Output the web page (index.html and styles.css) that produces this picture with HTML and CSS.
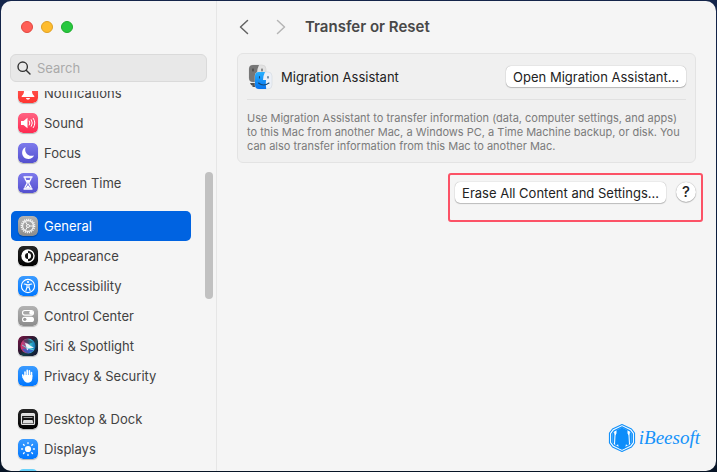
FILE: index.html
```html
<!DOCTYPE html>
<html lang="en">
<head>
<meta charset="utf-8">
<title>Transfer or Reset</title>
<link rel="stylesheet" href="styles.css">
</head>
<body>
<svg class="defs" aria-hidden="true">
  <defs>
    <linearGradient id="blue" x2="0" y2="1"><stop stop-color="#3b9bff"/><stop offset="1" stop-color="#0077ff"/></linearGradient>
    <linearGradient id="red" x2="0" y2="1"><stop stop-color="#ff5f57"/><stop offset="1" stop-color="#ff3430"/></linearGradient>
    <linearGradient id="pink" x2="0" y2="1"><stop stop-color="#ff6482"/><stop offset="1" stop-color="#ff2950"/></linearGradient>
    <linearGradient id="indigo" x2="0" y2="1"><stop stop-color="#7d7aec"/><stop offset="1" stop-color="#5450cf"/></linearGradient>
    <linearGradient id="gray" x2="0" y2="1"><stop stop-color="#b2b2b2"/><stop offset="1" stop-color="#8c8c8c"/></linearGradient>
    <linearGradient id="black" x2="0" y2="1"><stop stop-color="#262626"/><stop offset="1" stop-color="#000"/></linearGradient>
    <linearGradient id="siri" x2="1" y2="1"><stop stop-color="#7c1748"/><stop offset=".45" stop-color="#2c1830"/><stop offset=".6" stop-color="#133f48"/><stop offset="1" stop-color="#150c2c"/></linearGradient>
    <linearGradient id="orb" x2="1" y2="0"><stop stop-color="#e42f68"/><stop offset=".45" stop-color="#785a91"/><stop offset=".65" stop-color="#33c0cf"/><stop offset="1" stop-color="#176bb0"/></linearGradient>
    <linearGradient id="face" x2="0" y2="1"><stop stop-color="#27b0ff"/><stop offset="1" stop-color="#0873ee"/></linearGradient>
  </defs>
</svg>
<div class="window">
  <aside class="sidebar">
    <div class="lights"><i class="close"></i><i class="minimize"></i><i class="expand"></i></div>
    <label class="search">
      <svg width="14" height="14" viewBox="0 0 14 14" fill="none" stroke="#333" stroke-width="1.4" stroke-linecap="round"><circle cx="5.7" cy="5.7" r="4.7"/><path d="M9.2 9.2 13 13"/></svg>
      <input type="text" placeholder="Search" aria-label="Search">
    </label>
    <nav class="scroller">
      <ul>
        <li><a href="#"><svg class="icon" viewBox="0 0 20 20"><rect width="20" height="20" rx="5" fill="url(#red)"/><path fill="#fff" d="M10 3c-3 0-4 2.2-4 4.500 0 3-.7 4-2.300 5.500v1h12.600v-1C14.700 11.500 14 10.500 14 7.500 14 5.200 13 3 10 3zM8 15c.3 2.300 3.700 2.300 4 0z"/></svg>Notifications</a></li>
        <li><a href="#"><svg class="icon" viewBox="0 0 20 20"><rect width="20" height="20" rx="5" fill="url(#pink)"/><path fill="#fff" d="M3 8h2.500L9.500 4.700v10.600L5.500 12H3z"/><path fill="none" stroke="#fff" stroke-linecap="round" d="M11.300 8q1.300 2 0 4M13.300 6.700q2.200 3.300 0 6.600M15.300 5.400q3.200 4.600 0 9.200"/></svg>Sound</a></li>
        <li><a href="#"><svg class="icon" viewBox="0 0 20 20"><rect width="20" height="20" rx="5" fill="url(#indigo)"/><path fill="#fff" d="M7.600 4C2 7 3.300 15.700 10.200 16c2.700.1 4.800-1.300 5.800-3.500C9.800 14.200 5.800 9.200 7.600 4z"/></svg>Focus</a></li>
        <li><a href="#"><svg class="icon" viewBox="0 0 20 20"><rect width="20" height="20" rx="5" fill="url(#indigo)"/><path fill="none" stroke="#fff" stroke-width="1.300" d="M5.500 4h9M5.500 16h9M6.800 4c0 3.500 2.300 4 2.300 6s-2.300 2.500-2.300 6M13.200 4c0 3.500-2.300 4-2.300 6s2.300 2.500 2.300 6"/><path fill="#fff" d="M8 7h4l-1.500 3h-1zM7.300 15.500 10 12l2.700 3.500z"/></svg>Screen Time</a></li>
      </ul>
      <ul>
        <li><a href="#" class="selected" aria-current="page"><svg class="icon" viewBox="0 0 20 20"><rect width="20" height="20" rx="5" fill="url(#gray)"/><g fill="none" stroke="#f6f6f6"><circle cx="10" cy="10" r="6.600" stroke-width="1.500" stroke-dasharray="1.200 .87"/><circle cx="10" cy="10" r="5.400" stroke-width="1.200"/><circle cx="10" cy="10" r="1.500"/><path d="M11.500 10h4M9.200 8.700 7.300 5.400M9.200 11.300l-1.900 3.300"/></g></svg>General</a></li>
        <li><a href="#"><svg class="icon" viewBox="0 0 20 20"><rect width="20" height="20" rx="5" fill="url(#black)"/><circle cx="10" cy="10" r="6" fill="none" stroke="#fff" stroke-width="1.400"/><path fill="#fff" d="M10 4a6 6 0 0 0 0 12v-3a3 3 0 0 1 0-6zM10 7a3 3 0 0 1 0 6z"/></svg>Appearance</a></li>
        <li><a href="#"><svg class="icon" viewBox="0 0 20 20"><rect width="20" height="20" rx="5" fill="url(#blue)"/><circle cx="10" cy="10" r="6.600" fill="none" stroke="#fff" stroke-width="1.100"/><circle cx="10" cy="6" r="1.100" fill="#fff"/><path fill="none" stroke="#fff" stroke-width="1.100" stroke-linecap="round" stroke-linejoin="round" d="m6.300 8 2.700.6v2.700L7.900 14.500M13.700 8l-2.700.6v2.700l1.100 3.200M9 8.700h2v2.500H9z"/></svg>Accessibility</a></li>
        <li><a href="#"><svg class="icon" viewBox="0 0 20 20"><rect width="20" height="20" rx="5" fill="url(#gray)"/><rect x="4.500" y="4.500" width="11" height="4.600" rx="2.300" fill="none" stroke="#fff" stroke-width="1.100"/><circle cx="13.200" cy="6.800" r="2" fill="#fff"/><rect x="4" y="10.700" width="12" height="5.300" rx="2.600" fill="#fff"/><circle cx="6.800" cy="13.300" r="1.600" fill="#999"/></svg>Control Center</a></li>
        <li><a href="#"><svg class="icon" viewBox="0 0 20 20"><rect width="20" height="20" rx="5" fill="url(#siri)"/><circle cx="10" cy="10" r="7.500" fill="url(#orb)"/><path fill="#26323e" opacity=".55" d="M5 5q5-4 10 1l-4 2z"/><path fill="#3957c9" opacity=".8" d="M4 13q6-1 12 1-4 5-9 2z"/><path fill="#fff" d="M7 7q3 .3 5 2.400l4 2.300-5 .8-2 2-.7-3.500z" opacity=".9"/><path d="M4 9q5 4 12 5" fill="none" stroke="#6de6ec" stroke-width=".8"/></svg>Siri &amp; Spotlight</a></li>
        <li><a href="#"><svg class="icon" viewBox="0 0 20 20"><rect width="20" height="20" rx="5" fill="url(#blue)"/><path fill="none" stroke="#fff" stroke-width="1.600" stroke-linecap="round" d="M7 11V6M9.200 10V4.400M11.400 10V4.700M13.500 11V6.500M5.300 11.500 4.700 9"/><path fill="#fff" d="M6.200 9h8.100v3.300c0 2.800-1.500 4.400-4.200 4.400-2.500 0-4.500-1.600-5.600-5.200z"/></svg>Privacy &amp; Security</a></li>
      </ul>
      <ul>
        <li><a href="#"><svg class="icon" viewBox="0 0 20 20"><rect width="20" height="20" rx="5" fill="url(#black)"/><rect x="3.500" y="4.500" width="13" height="11" rx="1" fill="none" stroke="#e6e6e6" stroke-width="1.200"/><path fill="#ddd" d="M4 5h12v2H4zM5.500 11h9l1 3.500h-11z"/><path d="M5.500 8.500h9" stroke="#999"/></svg>Desktop &amp; Dock</a></li>
        <li><a href="#"><svg class="icon" viewBox="0 0 20 20"><rect width="20" height="20" rx="5" fill="url(#blue)"/><circle cx="10" cy="10" r="3.100" fill="#fff"/><path stroke="#fff" stroke-width="1.300" stroke-linecap="round" d="M10 3.600v1M10 15.400v1M3.600 10h1M15.400 10h1M5.500 5.500l.7.7M13.800 13.800l.7.7M14.500 5.500l-.7.7M6.200 13.800l-.7.7"/></svg>Displays</a></li>
        <li><a href="#" aria-label="Wallpaper"><svg class="icon" viewBox="0 0 20 20"><rect width="20" height="20" rx="5" fill="#67d1fa"/></svg></a></li>
      </ul>
    </nav>
    <div class="thumb"></div>
  </aside>
  <main>
    <header>
      <button class="arrow" aria-label="Back"><svg width="10" height="16" viewBox="0 0 10 16"><path d="M8.500 1.500 1.500 8l7 6.500"/></svg></button>
      <button class="arrow forward" aria-label="Forward"><svg width="10" height="16" viewBox="0 0 10 16"><path d="m1.500 1.500 7 6.500-7 6.500"/></svg></button>
      <h1>Transfer or Reset</h1>
    </header>
    <section class="card">
      <div class="card-head">
        <svg width="26" height="26" viewBox="0 0 26 26" aria-hidden="true">
          <rect x="2" y="1" width="17" height="17" rx="4" fill="#e2e2e2" stroke="#ccc" stroke-width=".5"/>
          <path fill="#777" d="M6 1h6q-2 4-2 8v9H6q-4 0-4-4V5q0-4 4-4z"/>
          <path stroke="#333" stroke-linecap="round" d="M6 5v2M15 5v2"/>
          <path fill="#555" d="M3 19h5v4H5l1-1q-2 0-3-3z"/>
          <rect x="8" y="8" width="17" height="17" rx="4" fill="#ecf0f7" stroke="#cfd4db" stroke-width=".5"/>
          <path fill="url(#face)" d="M12 8h6q-2 4-2 8h3q-.5 4 .2 9H12q-4 0-4-4v-9q0-4 4-4z"/>
          <path fill="none" stroke="#17466f" stroke-width="1.100" stroke-linecap="round" d="M12.500 12.500v1.500M21 12.500v1.500M11.500 19q5 4 10.500 0"/>
        </svg>
        <h2>Migration Assistant</h2>
        <button class="push">Open Migration Assistant…</button>
      </div>
      <p>Use Migration Assistant to transfer information (data, computer settings, and apps) to this Mac from another Mac, a Windows PC, a Time Machine backup, or disk. You can also transfer information from this Mac to another Mac.</p>
    </section>
    <div class="highlight">
      <button class="push">Erase All Content and Settings…</button>
      <button class="help" aria-label="Help">?</button>
    </div>
    <footer>
      <svg width="28" height="30" viewBox="0 0 28 30" aria-hidden="true">
        <path fill="#fff" stroke="#1492fa" stroke-width="1.200" stroke-linejoin="round" d="m14 1.500 9.500 4.500 3 4v10l-3 4L14 28.500 4.500 24l-3-4V10l3-4z"/>
        <path fill="#fff" stroke="#1492fa" stroke-width="1.300" stroke-linejoin="round" d="m14 3.800 8 4 2.300 3v8.400l-2.300 3-8 4-8-4-2.300-3v-8.400L6 7.800z"/>
        <path fill="#0d8dfa" d="M8.500 7.300 14 4.500l5.500 2.800v3l1 2.200.5 9-2 1-1-1.500-.8 4L14 26l-3.200-1-.8-4L9 22.500l-2-1 .5-9 1-2.200z"/>
        <path fill="#1492fa" d="m4.300 11 1.700-2 .5 3-.5 9-1.700-2zM23.700 11 22 9l-.5 3 .5 9 1.700-2z"/>
      </svg>
      <span>iBeesoft</span>
    </footer>
  </main>
</div>
</body>
</html>
```
FILE: styles.css
```css
* { box-sizing: border-box; }
body {
  margin: 0;
  padding: 1px;
  height: 100vh;
  background: linear-gradient(#14254a, #0a1c3c 60%, #071426);
  font: 13px/16px Inter, "Liberation Sans", sans-serif;
  color: #424242;
}
button, input { font: inherit; color: inherit; }
.defs { position: absolute; width: 0; height: 0; }
.window {
  display: flex;
  height: 100%;
  overflow: hidden;
  border-radius: 10px;
  background: #f5f5f5;
}
.sidebar {
  position: relative;
  flex: 0 0 216px;
  min-width: 0;
  display: flex;
  flex-direction: column;
  border-right: 1px solid #e6e6e6;
}
.lights { display: flex; gap: 8px; padding: 20px 20px 0; }
.lights i { width: 12px; height: 12px; border-radius: 50%; border: 1px solid; }
.lights .close { background: #ff5f57; border-color: #e2463f; }
.lights .minimize { background: #febc2e; border-color: #dfa023; }
.lights .expand { background: #28c840; border-color: #1dac2c; }
.search {
  display: flex;
  align-items: center;
  gap: 6px;
  height: 28px;
  margin: 21px 9px 9px;
  padding: 0 6px;
  border: 1px solid #dadada;
  border-radius: 6px;
  background: #e8e8e8;
}
.search input { flex: 1; width: 0; min-width: 0; border: 0; padding: 0; background: none; outline: 0; }
.search input::placeholder { color: #aaa; opacity: 1; }
.scroller { flex: 1; min-height: 0; overflow: hidden; }
.scroller ul { list-style: none; margin: 0 0 13px; padding: 0 25px 0 10px; }
.scroller ul:first-child { margin-top: -13px; }
.scroller a {
  display: flex;
  align-items: center;
  gap: 6px;
  height: 30px;
  padding: 0 7px;
  border-radius: 5px;
  color: inherit;
  text-decoration: none;
}
.scroller .selected { background: #0063e1; color: #fff; }
.icon { width: 20px; height: 20px; flex: none; border-radius: 5px; box-shadow: 0 1px 1px #0004; }
.thumb { position: absolute; top: 171px; right: 3px; width: 8px; height: 127px; border-radius: 4px; background: #c1c1c1; }
main { flex: 1; min-width: 0; display: flex; flex-direction: column; }
header { display: flex; align-items: center; height: 52px; padding-left: 22px; }
.arrow { display: flex; border: 0; padding: 0; margin-right: 27px; background: none; }
.arrow.forward { margin-right: 19px; }
.arrow path { fill: none; stroke: #636363; stroke-width: 1.5; stroke-linecap: round; stroke-linejoin: round; }
.arrow.forward path { stroke: #b5b5b5; }
h1 { margin: 0; font-size: 15px; line-height: 20px; font-weight: 600; color: #484848; }
.card {
  margin: 0 20px;
  padding: 0 9px;
  border: 1px solid #e3e3e3;
  border-radius: 6px;
  background: #f0f0f0;
}
.card-head { display: flex; align-items: center; height: 46px; border-bottom: 1px solid #e1e1e1; }
h2 { flex: 1; margin: 0 0 0 8px; font-size: 13px; font-weight: 400; color: #222; }
.card p { margin: 11px 0 9px; font-size: 11px; line-height: 14px; color: #7b7b7b; }
.push, .help {
  border: 0;
  background: #fff;
  color: #222;
  box-shadow: 0 0 1px #0006, 0 1px 1px #0003;
}
.push { height: 21px; padding: 0 7px; border-radius: 5px; line-height: 20px; white-space: nowrap; }
.help { width: 20px; height: 20px; padding: 0; border-radius: 50%; font-size: 15px; font-weight: 500; line-height: 20px; }
.highlight {
  align-self: flex-end;
  display: flex;
  align-items: flex-start;
  gap: 10px;
  height: 49px;
  margin: 10px 13px 0 0;
  padding: 7px 5px 0;
  border: 2px solid #fc5266;
  border-radius: 3px;
}
footer { display: flex; align-items: center; justify-content: flex-end; gap: 3px; margin-top: auto; padding: 0 16px 18px 0; }
footer span { font: italic 19px/30px "Liberation Serif", serif; color: #1492fa; }
```
